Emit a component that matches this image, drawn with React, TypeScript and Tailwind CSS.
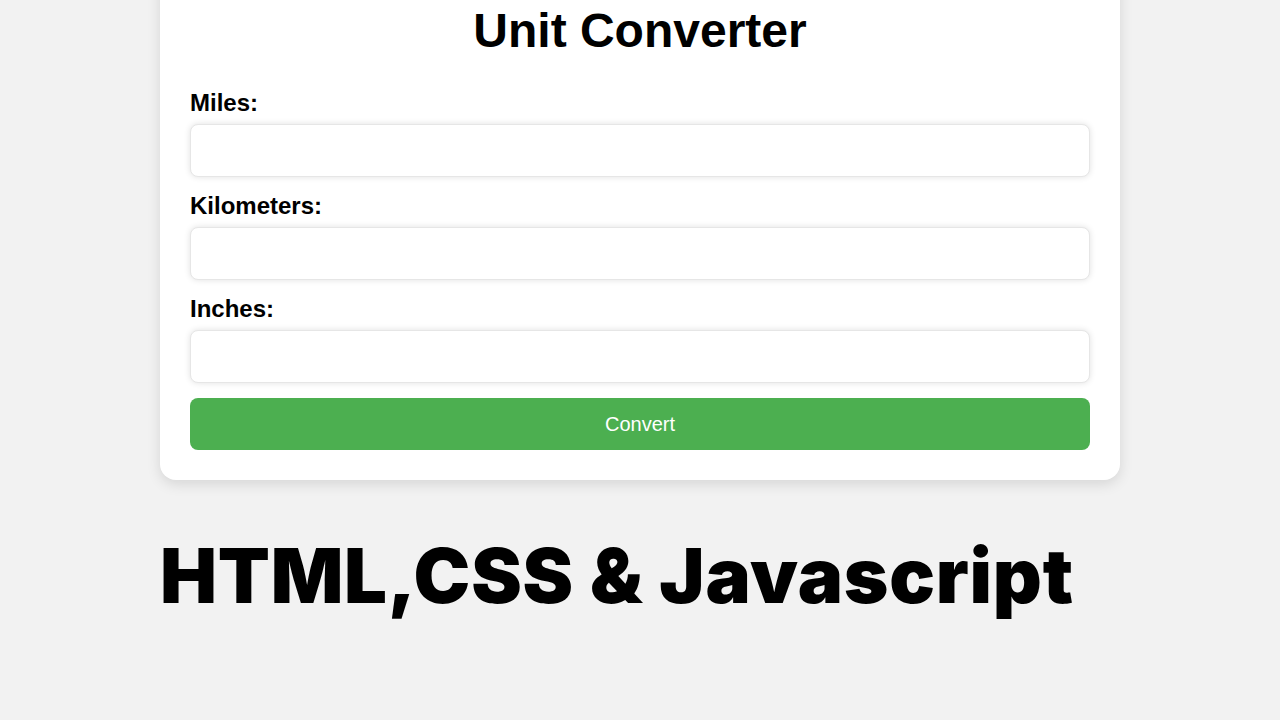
import { useState } from "react";

const fields = ["Miles", "Kilometers", "Inches"];

export default function App() {
  const [values, setValues] = useState<Record<string, string>>({});

  return (
    <div className="min-h-[720px] w-full overflow-hidden bg-[#f2f2f2] font-['Liberation_Sans',Arial,sans-serif]">
      <div className="mx-auto mt-[-27px] w-[960px] rounded-[16px] bg-white px-[30px] pt-[30px] pb-[30px] shadow-[0_4px_14px_rgba(0,0,0,0.12)]">
        <h1 className="text-center text-[48px] font-bold leading-[55px] text-black">
          Unit Converter
        </h1>

        <div className="mt-[31px]">
          {fields.map((name, i) => (
            <div key={name} className={i > 0 ? "mt-[15px]" : ""}>
              <label className="block text-[24px] font-bold leading-[28px] text-black">
                {name}:
              </label>
              <input
                type="number"
                value={values[name] ?? ""}
                onChange={(e) => setValues({ ...values, [name]: e.target.value })}
                className="mt-[7px] block h-[53px] w-full rounded-[8px] border border-[#e6e6e6] bg-white px-3 text-[20px] shadow-[0_0_6px_rgba(0,0,0,0.12)] outline-none"
              />
            </div>
          ))}
        </div>

        <button className="mt-[15px] block h-[52px] w-full rounded-[8px] bg-[#4caf50] text-[20px] text-white">
          Convert
        </button>
      </div>

      <div className="mx-auto w-[960px]">
        <h2 className="mt-[49px] font-['Inter',sans-serif] text-[76px] font-black leading-[92px] tracking-[0.01em] text-black">
          HTML,CSS &amp; Javascript
        </h2>
      </div>
    </div>
  );
}
